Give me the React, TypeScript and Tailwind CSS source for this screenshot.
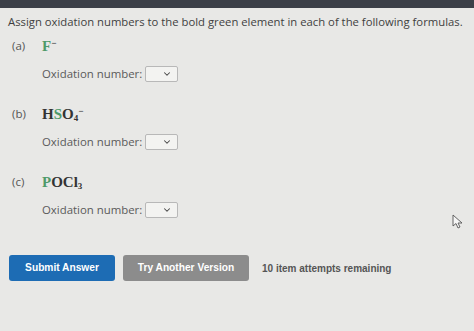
import { ChevronDown } from 'lucide-react';

const sans = { fontFamily: '"Open Sans", "Noto Sans", sans-serif' };
const arial = { fontFamily: '"Liberation Sans", Arial, sans-serif' };

function OxSelect() {
  return (
    <div className="flex items-center gap-[3px] h-[16px] text-[11.4px] text-[#5a5a5a]">
      <span>Oxidation number:</span>
      <div className="w-[33px] h-[16px] bg-[#f3f3f1] border border-[#b8b8b8] rounded-[2px] flex items-center justify-end pr-[5px]">
        <ChevronDown size={10} strokeWidth={2.5} className="text-[#444]" />
      </div>
    </div>
  );
}

function Part({ label, formula }: { label: string; formula: React.ReactNode }) {
  return (
    <div>
      <div className="flex items-center h-[20px]">
        <span className="w-[30px] pl-[12px] text-[11.5px] text-[#555] box-content">{label}</span>
        <span className="text-[15px] font-bold text-[#333]" style={{ fontFamily: '"Liberation Serif", "DejaVu Serif", serif' }}>{formula}</span>
      </div>
      <div className="pl-[42px] mt-[10px]">
        <OxSelect />
      </div>
    </div>
  );
}

export default function App() {
  return (
    <div className="w-[474px] h-[331px] bg-[#e8e8e6] overflow-hidden relative" style={sans}>
      <div className="h-[8px] bg-[#3c4048]" />
      <div className="pl-[8px] pt-[5px] h-[28px] text-[11.3px] leading-[18px] text-[#3f3f3f] whitespace-nowrap">
        Assign oxidation numbers to the bold green element in each of the following formulas.
      </div>
      <div className="flex flex-col gap-[22px]">
        <Part label="(a)" formula={<><span className="text-[#4e9a6a]">F</span><sup className="text-[9px]">−</sup></>} />
        <Part label="(b)" formula={<>H<span className="text-[#4e9a6a]">S</span>O<sub className="text-[9px]">4</sub><sup className="text-[9px]">−</sup></>} />
        <Part label="(c)" formula={<><span className="text-[#4e9a6a]">P</span>OCl<sub className="text-[9px]">3</sub></>} />
      </div>
      <div className="flex items-center mt-[37px] pl-[9px] gap-[8px]">
        <button className="w-[106px] h-[26px] bg-[#1d6cb4] rounded-[3px] text-white text-[10.2px] font-bold" style={arial}>Submit Answer</button>
        <button className="w-[126px] h-[26px] bg-[#8c8c8c] rounded-[3px] text-white text-[10.2px] font-bold" style={arial}>Try Another Version</button>
        <span className="ml-[5px] text-[10px] font-bold text-[#555]" style={arial}>10 item attempts remaining</span>
      </div>
      <svg className="absolute left-[452px] top-[214px]" width="12" height="16" viewBox="0 0 12 16">
        <path d="M1 1 L1 12 L4 9.5 L6 14 L8 13 L6 9 L10 9 Z" fill="#f5f5f5" stroke="#555" strokeWidth="0.9" strokeLinejoin="round" />
      </svg>
    </div>
  );
}
